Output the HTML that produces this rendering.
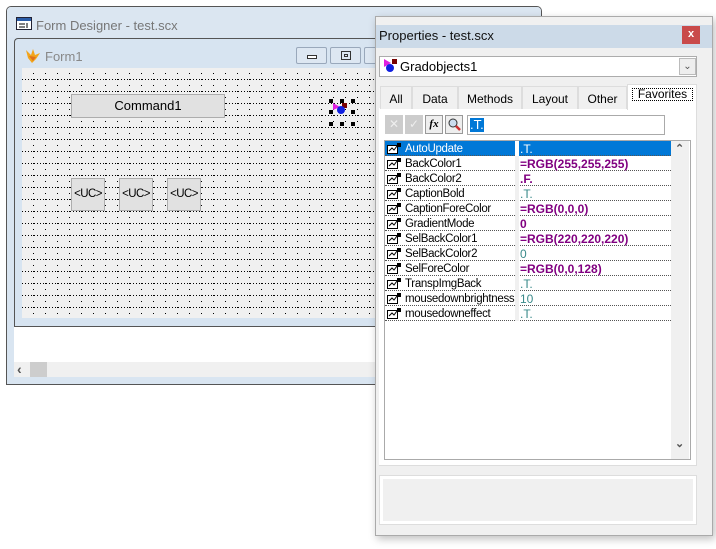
<!DOCTYPE html><html><head><style>
*{box-sizing:border-box;margin:0;padding:0}
body{width:716px;height:549px;background:#fff;position:relative;overflow:hidden;font-family:"Liberation Sans",sans-serif;font-size:12px}
.a{position:absolute}
</style></head><body>
<div class="a" style="left:6px;top:6px;width:536px;height:379px;border:1px solid #555;border-radius:5px 5px 0 0;background:#d9e5f1"></div>
<div class="a" style="left:7px;top:7px;width:534px;height:30px;background:#dbe6f1;border-radius:4px 4px 0 0"></div>
<svg class="a" style="left:16px;top:17px" width="16" height="13"><rect x="0.5" y="0.5" width="15" height="12" fill="#fff" stroke="#223"/><rect x="1" y="1" width="14" height="3" fill="#2a5ca8"/><line x1="3" y1="7" x2="9" y2="7" stroke="#000"/><line x1="3" y1="10" x2="9" y2="10" stroke="#000"/><line x1="11" y1="6" x2="11" y2="11" stroke="#000"/></svg>
<div class="a" style="left:36px;top:18px;font-size:13px;color:#777">Form Designer - test.scx</div>
<div class="a" style="left:14px;top:38px;width:528px;height:289px;border:1px solid #555;border-right:none;border-radius:4px 0 0 0;background:#d7e4f1"></div>
<svg class="a" style="left:24px;top:47px" width="18" height="17"><path d="M2 3 L7 8 L9 2 L11 8 L16 6 L12 12 L8 16 L4 11 Z" fill="#f2a51c"/><path d="M5 9 L9 14 L12 10" fill="#e0701a"/></svg>
<div class="a" style="left:45px;top:49px;font-size:13px;color:#888">Form1</div>
<div class="a" style="left:296px;top:47px;width:31px;height:17px;border:1px solid #99a8bb;border-radius:2px;background:#dde7f2"><div class="a" style="left:10px;top:7px;width:10px;height:4px;border:1px solid #333;background:#fff"></div></div>
<div class="a" style="left:330px;top:47px;width:31px;height:17px;border:1px solid #99a8bb;border-radius:2px;background:#dde7f2"><div class="a" style="left:10px;top:3px;width:10px;height:9px;border:1px solid #333"></div><div class="a" style="left:13px;top:6px;width:4px;height:3px;border:1px solid #333"></div></div>
<div class="a" style="left:364px;top:47px;width:14px;height:17px;border:1px solid #99a8bb;border-radius:2px;background:#dde7f2"></div>
<svg class="a" style="left:22px;top:68px" width="355" height="250"><defs><pattern id="h" x="0" y="0" width="3" height="12" patternUnits="userSpaceOnUse"><rect x="0" y="11" width="1" height="1" fill="#000"/></pattern><pattern id="v" width="12" height="6" patternUnits="userSpaceOnUse"><rect x="11" y="5" width="1" height="1" fill="#000"/></pattern></defs><rect width="355" height="250" fill="#f0f0f0"/><rect width="355" height="250" fill="url(#h)"/><rect width="355" height="250" fill="url(#v)"/></svg>
<div class="a" style="left:71px;top:94px;width:154px;height:24px;border:1px solid #adadad;background:#e1e1e1;text-align:center;line-height:22px;font-size:13px">Command1</div>
<div class="a" style="left:71px;top:178px;width:34px;height:33px;border:1px solid #adadad;background:#e1e1e1;text-align:center;line-height:31px;letter-spacing:-0.6px;font-size:11.5px">&lt;UC&gt;</div>
<div class="a" style="left:119px;top:178px;width:34px;height:33px;border:1px solid #adadad;background:#e1e1e1;text-align:center;line-height:31px;letter-spacing:-0.6px;font-size:11.5px">&lt;UC&gt;</div>
<div class="a" style="left:167px;top:178px;width:34px;height:33px;border:1px solid #adadad;background:#e1e1e1;text-align:center;line-height:31px;letter-spacing:-0.6px;font-size:11.5px">&lt;UC&gt;</div>
<svg class="a" style="left:328px;top:98px" width="28" height="30"><g fill="#000"><rect x="1" y="1" width="4" height="4"/><rect x="12" y="1" width="4" height="4"/><rect x="23" y="1" width="4" height="4"/><rect x="1" y="12" width="4" height="4"/><rect x="23" y="12" width="4" height="4"/><rect x="1" y="24" width="4" height="4"/><rect x="12" y="24" width="4" height="4"/><rect x="23" y="24" width="4" height="4"/></g><path d="M5 5 L12 9 L5 12Z" fill="#e020e0"/><rect x="14" y="5" width="5" height="5" fill="#700"/><circle cx="13" cy="12" r="4" fill="#1020e0"/></svg>
<div class="a" style="left:14px;top:327px;width:528px;height:36px;background:#fff"></div>
<div class="a" style="left:14px;top:362px;width:528px;height:15px;background:#f0f0f0"></div>
<div class="a" style="left:30px;top:362px;width:17px;height:15px;background:#cdcdcd"></div>
<div class="a" style="left:17px;top:361px;font-size:14px;color:#555;font-weight:bold">&lsaquo;</div>
<div class="a" style="left:375px;top:16px;width:338px;height:520px;border:1px solid #aaa;background:#f0f0f0;box-shadow:2px 3px 8px rgba(0,0,0,.25)"></div>
<div class="a" style="left:376px;top:25px;width:336px;height:23px;background:#ccdae8"></div>
<div class="a" style="left:379px;top:28px;font-size:13px;color:#111">Properties - test.scx</div>
<div class="a" style="left:682px;top:26px;width:18px;height:18px;background:#c94a4a;color:#fff;font-size:11px;text-align:center;line-height:17px;font-weight:bold">x</div>
<div class="a" style="left:379px;top:56px;width:318px;height:21px;border:1px solid #acacac;background:#fff"></div>
<svg class="a" style="left:384px;top:59px" width="14" height="14"><path d="M0 0 L7 4 L0 8Z" fill="#e020e0"/><rect x="8" y="0" width="5" height="5" fill="#700"/><circle cx="6" cy="9" r="4" fill="#1020e0"/></svg>
<div class="a" style="left:400px;top:59px;font-size:13px">Gradobjects1</div>
<div class="a" style="left:679px;top:58px;width:17px;height:17px;border:1px solid #bbb;background:#eee;color:#555;text-align:center;font-size:10px;line-height:15px">&#8964;</div>
<div class="a" style="left:379px;top:108px;width:318px;height:358px;background:#fff;border-right:1px solid #ddd;border-bottom:1px solid #ddd"></div>
<div class="a" style="left:380px;top:86px;width:32px;height:23px;border:1px solid #ddd;border-bottom:none;background:#f0f0f0;text-align:center;line-height:24px;font-size:12px">All</div>
<div class="a" style="left:412px;top:86px;width:46px;height:23px;border:1px solid #ddd;border-bottom:none;background:#f0f0f0;text-align:center;line-height:24px">Data</div>
<div class="a" style="left:458px;top:86px;width:64px;height:23px;border:1px solid #ddd;border-bottom:none;background:#f0f0f0;text-align:center;line-height:24px">Methods</div>
<div class="a" style="left:522px;top:86px;width:56px;height:23px;border:1px solid #ddd;border-bottom:none;background:#f0f0f0;text-align:center;line-height:24px">Layout</div>
<div class="a" style="left:578px;top:86px;width:49px;height:23px;border:1px solid #ddd;border-bottom:none;background:#f0f0f0;text-align:center;line-height:24px">Other</div>
<div class="a" style="left:627px;top:84px;width:70px;height:26px;border:1px solid #ddd;border-bottom:none;background:#fff"><div style="margin:3px 3px 0 4px;border:1px dotted #000;height:13px;text-align:center;line-height:11px">Favorites</div></div>
<div class="a" style="left:385px;top:115px;width:18px;height:19px;border:1px solid #ccc;background:#ccc;color:#eee;text-align:center;line-height:17px">✕</div>
<div class="a" style="left:405px;top:115px;width:18px;height:19px;border:1px solid #ccc;background:#ccc;color:#eee;text-align:center;line-height:17px">✓</div>
<div class="a" style="left:425px;top:115px;width:18px;height:19px;border:1px solid #999;background:#eee;font-family:'Liberation Serif',serif;font-style:italic;font-weight:bold;text-align:center;line-height:17px;font-size:11px">fx</div>
<div class="a" style="left:445px;top:115px;width:18px;height:19px;border:1px solid #999;background:#eee"><svg width="16" height="17"><circle cx="7" cy="7" r="4" fill="#cde" stroke="#333"/><line x1="10" y1="10" x2="14" y2="14" stroke="#c33" stroke-width="2.5"/></svg></div>
<div class="a" style="left:467px;top:115px;width:198px;height:20px;border:1px solid #aaa;background:#fff"><span style="position:absolute;left:2px;top:2px;background:#0078d7;color:#fff;font-size:13px;line-height:14px">.T.</span></div>
<div class="a" style="left:384px;top:140px;width:307px;height:320px;border:1px solid #aaa;background:#fff"></div>
<div class="a" style="left:671px;top:141px;width:18px;height:318px;background:#f0f0f0"></div>
<div class="a" style="left:675px;top:142px;color:#555;font-size:11px;font-weight:bold">&#8963;</div>
<div class="a" style="left:675px;top:437px;color:#555;font-size:11px;font-weight:bold">&#8964;</div>
<div class="a" id="rows" style="left:385px;top:141px;width:286px"></div>
<div class="a" style="left:379px;top:475px;width:318px;height:50px;border:1px solid #ddd;background:#fff;padding:3px"><div style="background:#f0f0f0;height:42px"></div></div>
<script>
var r=[["AutoUpdate",".T.",0],["BackColor1","=RGB(255,255,255)",1],["BackColor2",".F.",1],["CaptionBold",".T.",2],["CaptionForeColor","=RGB(0,0,0)",1],["GradientMode","0",1],["SelBackColor1","=RGB(220,220,220)",1],["SelBackColor2","0",2],["SelForeColor","=RGB(0,0,128)",1],["TranspImgBack",".T.",2],["mousedownbrightness","10",2],["mousedowneffect",".T.",2]];
var h="";r.forEach(function(x,i){var sel=i==0;var vs=x[2]==1?"color:#800080;font-weight:bold":x[2]==2?"color:#3a8a8a":"color:#fff";
h+='<div style="position:relative;height:15px;border-bottom:1px dotted #555;'+(sel?'background:#0078d7;':'')+'"><svg style="position:absolute;left:2px;top:2px" width="14" height="11"><rect x="0.5" y="2.5" width="10" height="8" fill="#fff" stroke="#000"/><path d="M2 8 L5 5 L7 7 L10 3" stroke="#000" fill="none"/><rect x="10" y="0" width="4" height="4" fill="#000"/></svg><span style="position:absolute;left:20px;top:1px;line-height:14px;font-size:11.5px;letter-spacing:-0.3px;white-space:nowrap;'+(sel?'color:#fff;':'')+'">'+x[0]+'</span><div style="position:absolute;left:130px;top:0;width:4px;height:15px;background:'+(sel?'#fff':'#f0f0f0')+'"></div><span style="position:absolute;left:135px;top:1px;line-height:14px;'+vs+'">'+x[1]+'</span></div>'});
document.getElementById('rows').innerHTML=h;
</script>
</body></html>
